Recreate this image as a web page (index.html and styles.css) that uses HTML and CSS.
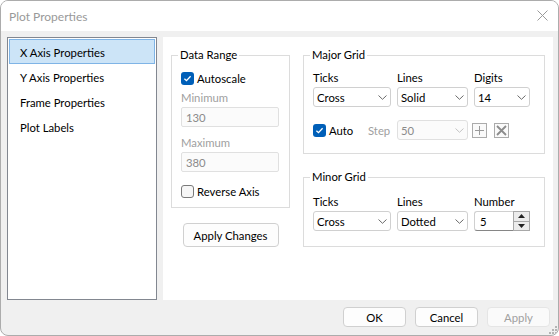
FILE: index.html
```html
<!DOCTYPE html>
<html lang="en">
<head>
    <meta charset="UTF-8">
    <title>Plot Properties</title>
    <link rel="stylesheet" href="styles.css">
</head>
<body>

<div class="window">
    <div class="titlebar">
        <span class="title">Plot Properties</span>
        <svg class="close" width="11" height="11" viewBox="0 0 11 11">
            <path d="M0.5 0.5 L10.5 10.5 M10.5 0.5 L0.5 10.5" stroke="#9a9a9a" stroke-width="1" fill="none"/>
        </svg>
    </div>

    <div class="main">
        <ul class="nav-list">
            <li class="selected">X Axis Properties</li>
            <li>Y Axis Properties</li>
            <li>Frame Properties</li>
            <li>Plot Labels</li>
        </ul>

        <div class="page">
            <div class="col-left">
                <fieldset class="group range">
                    <legend>Data Range</legend>
                    <div class="check-row first">
                        <span class="checkbox checked">
                            <svg width="13" height="13" viewBox="0 0 13 13"><path d="M3.4 6.7 L5.5 8.7 L9.6 4.3" stroke="#fff" stroke-width="1.3" fill="none"/></svg>
                        </span>
                        <span>Autoscale</span>
                    </div>
                    <div class="field-label disabled">Minimum</div>
                    <div class="textbox disabled">130</div>
                    <div class="field-label disabled second">Maximum</div>
                    <div class="textbox disabled">380</div>
                    <div class="check-row reverse">
                        <span class="checkbox"></span>
                        <span>Reverse Axis</span>
                    </div>
                </fieldset>
                <button class="btn apply-changes">Apply Changes</button>
            </div>

            <div class="col-right">
                <fieldset class="group major">
                    <legend>Major Grid</legend>
                    <div class="grid-fields">
                        <span>Ticks</span>
                        <span>Lines</span>
                        <span>Digits</span>
                        <div class="combo"><span>Cross</span><svg width="9" height="5" viewBox="0 0 9 5"><path d="M0.5 0.5 L4.5 4.3 L8.5 0.5" stroke="#6a6a6a" fill="none"/></svg></div>
                        <div class="combo"><span>Solid</span><svg width="9" height="5" viewBox="0 0 9 5"><path d="M0.5 0.5 L4.5 4.3 L8.5 0.5" stroke="#6a6a6a" fill="none"/></svg></div>
                        <div class="combo"><span>14</span><svg width="9" height="5" viewBox="0 0 9 5"><path d="M0.5 0.5 L4.5 4.3 L8.5 0.5" stroke="#6a6a6a" fill="none"/></svg></div>
                    </div>
                    <div class="step-row">
                        <div class="check-row auto">
                            <span class="checkbox checked">
                                <svg width="13" height="13" viewBox="0 0 13 13"><path d="M3.4 6.7 L5.5 8.7 L9.6 4.3" stroke="#fff" stroke-width="1.3" fill="none"/></svg>
                            </span>
                            <span>Auto</span>
                        </div>
                        <span class="step-label disabled">Step</span>
                        <div class="combo step disabled"><span>50</span><svg width="9" height="5" viewBox="0 0 9 5"><path d="M0.5 0.5 L4.5 4.3 L8.5 0.5" stroke="#c4c4c4" fill="none"/></svg></div>
                        <svg class="tool-btn" width="15" height="15" viewBox="0 0 15 15">
                            <rect x="0.5" y="0.5" width="14" height="14" fill="#fafafa" stroke="#ababab"/>
                            <path d="M7.5 3 V12 M3 7.5 H12" stroke="#9a9a9a" fill="none"/>
                        </svg>
                        <svg class="tool-btn del" width="15" height="15" viewBox="0 0 15 15">
                            <rect x="0.5" y="0.5" width="14" height="14" fill="#fafafa" stroke="#ababab"/>
                            <path d="M3 3 L12 12 M12 3 L3 12" stroke="#8c8c8c" stroke-width="1.8" fill="none"/>
                        </svg>
                    </div>
                </fieldset>

                <fieldset class="group minor">
                    <legend>Minor Grid</legend>
                    <div class="grid-fields">
                        <span>Ticks</span>
                        <span>Lines</span>
                        <span>Number</span>
                        <div class="combo"><span>Cross</span><svg width="9" height="5" viewBox="0 0 9 5"><path d="M0.5 0.5 L4.5 4.3 L8.5 0.5" stroke="#6a6a6a" fill="none"/></svg></div>
                        <div class="combo"><span>Dotted</span><svg width="9" height="5" viewBox="0 0 9 5"><path d="M0.5 0.5 L4.5 4.3 L8.5 0.5" stroke="#6a6a6a" fill="none"/></svg></div>
                        <div class="spin">
                            <span class="spin-value">5</span>
                            <div class="spin-buttons">
                                <span class="spin-btn"><svg width="7" height="4" viewBox="0 0 7 4"><path d="M0 4 L3.5 0 L7 4 Z" fill="#222"/></svg></span>
                                <span class="spin-btn"><svg width="7" height="4" viewBox="0 0 7 4"><path d="M0 0 L3.5 4 L7 0 Z" fill="#222"/></svg></span>
                            </div>
                        </div>
                    </div>
                </fieldset>
            </div>
        </div>
    </div>

    <div class="footer">
        <button class="btn">OK</button>
        <button class="btn">Cancel</button>
        <button class="btn" disabled>Apply</button>
        <svg class="grip" width="8" height="8" viewBox="0 0 8 8">
            <rect x="6" y="0" width="2" height="2" fill="#b4b4b4"/>
            <rect x="3" y="3" width="2" height="2" fill="#b4b4b4"/>
            <rect x="6" y="3" width="2" height="2" fill="#b4b4b4"/>
            <rect x="0" y="6" width="2" height="2" fill="#b4b4b4"/>
            <rect x="3" y="6" width="2" height="2" fill="#b4b4b4"/>
            <rect x="6" y="6" width="2" height="2" fill="#b4b4b4"/>
        </svg>
    </div>
</div>

</body>
</html>
```

FILE: styles.css
```css
body {
    margin: 0;
    font-family: Lato, Roboto, sans-serif;
    font-size: 11.3px;
    color: #000;
    background: #fff;
}

.window {
    width: 559px;
    height: 336px;
    box-sizing: border-box;
    border: 1px solid #acacac;
    border-radius: 8px;
    overflow: hidden;
    background-color: #f0f0f0;
    display: flex;
    flex-direction: column;
}

.titlebar {
    height: 30px;
    flex: none;
    background-color: #fff;
    display: flex;
    align-items: center;
    justify-content: space-between;
    padding: 1px 10px 0 8px;
    box-sizing: border-box;
}

.title {
    color: #999;
    font-size: 12px;
}

.close {
    margin-top: -3px;
}

.main {
    display: flex;
    gap: 6px;
    height: 263px;
    padding: 6px 5px 0 6px;
    flex: none;
}

.nav-list {
    width: 150px;
    box-sizing: border-box;
    margin: 0;
    padding: 1px;
    list-style: none;
    background-color: #fff;
    border: 1px solid #828790;
}

.nav-list li {
    height: 25px;
    box-sizing: border-box;
    line-height: 23px;
    padding: 1px 0 0 10px;
    border: 1px solid transparent;
}

.nav-list li.selected {
    background-color: #cce4f7;
    border-color: #7fb4e6;
}

.page {
    width: 390px;
    box-sizing: border-box;
    background-color: #fff;
    display: flex;
    align-items: flex-start;
    gap: 13px;
    padding: 10px 0 0 8px;
}

.col-left {
    width: 119px;
    display: flex;
    flex-direction: column;
}

.col-right {
    width: 242px;
    display: flex;
    flex-direction: column;
}

.group {
    margin: 0;
    min-width: 0;
    box-sizing: border-box;
    border: 1px solid #dcdcdc;
    padding: 0 9px 7px 9px;
}

.group legend {
    padding: 0 2px;
    margin-left: -3px;
    line-height: 16px;
}

.disabled {
    color: #a0a0a0;
}

.check-row {
    display: flex;
    align-items: center;
    height: 18px;
    gap: 3px;
}

.check-row > span:last-child {
    padding-top: 1px;
}

.check-row.first {
    margin-top: 6px;
}

.check-row.reverse {
    margin-top: 10px;
}

.checkbox {
    width: 13px;
    height: 13px;
    box-sizing: border-box;
    border-radius: 3px;
    border: 1px solid #7a7a7a;
    background-color: #f6f6f6;
    display: flex;
    flex: none;
}

.checkbox.checked {
    border: none;
    background-color: #005fb8;
}

.field-label {
    line-height: 16px;
    margin-top: 3px;
}

.field-label.second {
    margin-top: 8px;
}

.textbox {
    height: 20px;
    box-sizing: border-box;
    margin-top: 1px;
    width: 98px;
    border: 1px solid #e0e0e0;
    border-radius: 2px;
    background-color: #fbfbfb;
    line-height: 18px;
    padding: 1px 0 0 4px;
}

.textbox.disabled {
    color: #8a8a8a;
}

.btn {
    font-family: inherit;
    font-size: 11.3px;
    color: #000;
    width: 63px;
    height: 20px;
    padding: 1px 0 0 0;
    box-sizing: border-box;
    border: 1px solid #d0d0d0;
    border-radius: 4px;
    background-color: #fdfdfd;
}

.btn:disabled {
    color: #a0a0a0;
    border-color: #e5e5e5;
    background-color: #fafafa;
}

.apply-changes {
    width: 96px;
    height: 24px;
    margin-top: 15px;
    align-self: center;
}

.grid-fields {
    display: grid;
    grid-template-columns: 78px 71px 56px;
    column-gap: 6px;
    row-gap: 1px;
    line-height: 16px;
}

.major .grid-fields {
    margin-top: 7px;
}

.minor .grid-fields {
    margin-top: 9px;
}

.combo {
    height: 20px;
    box-sizing: border-box;
    border: 1px solid #d0d0d0;
    border-radius: 3px;
    background-color: #fff;
    display: flex;
    align-items: center;
    justify-content: space-between;
    padding: 1px 3px 0 3px;
}

.combo.step {
    width: 71px;
    border-color: #e0e0e0;
    background-color: #fbfbfb;
    color: #8a8a8a;
}

.step-row {
    display: flex;
    align-items: center;
    margin-top: 13px;
    height: 20px;
}

.major {
    padding-bottom: 13px;
}

.minor {
    margin-top: 15px;
    padding-bottom: 15px;
}

.check-row.auto {
    width: 55px;
}

.step-label {
    width: 29px;
    padding-top: 1px;
}

.tool-btn {
    margin-left: 4px;
}

.tool-btn.del {
    margin-left: 7px;
}

.spin {
    height: 20px;
    display: flex;
}

.spin-value {
    width: 40px;
    box-sizing: border-box;
    border: 1px solid #d0d0d0;
    border-bottom-color: #868686;
    border-right: none;
    border-radius: 3px 0 0 3px;
    line-height: 18px;
    padding: 1px 0 0 5px;
}

.spin-buttons {
    width: 17px;
    box-sizing: border-box;
    border: 1px solid #a8a8a8;
    display: flex;
    flex-direction: column;
}

.spin-btn {
    flex: 1;
    display: flex;
    align-items: center;
    justify-content: center;
    background-color: #ececec;
}

.spin-btn + .spin-btn {
    border-top: 1px solid #a8a8a8;
}

.footer {
    flex: 1;
    position: relative;
    display: flex;
    justify-content: flex-end;
    align-items: flex-start;
    gap: 9px;
    padding: 7px 8px 0 0;
}

.grip {
    position: absolute;
    right: 1px;
    bottom: 1px;
}
```
